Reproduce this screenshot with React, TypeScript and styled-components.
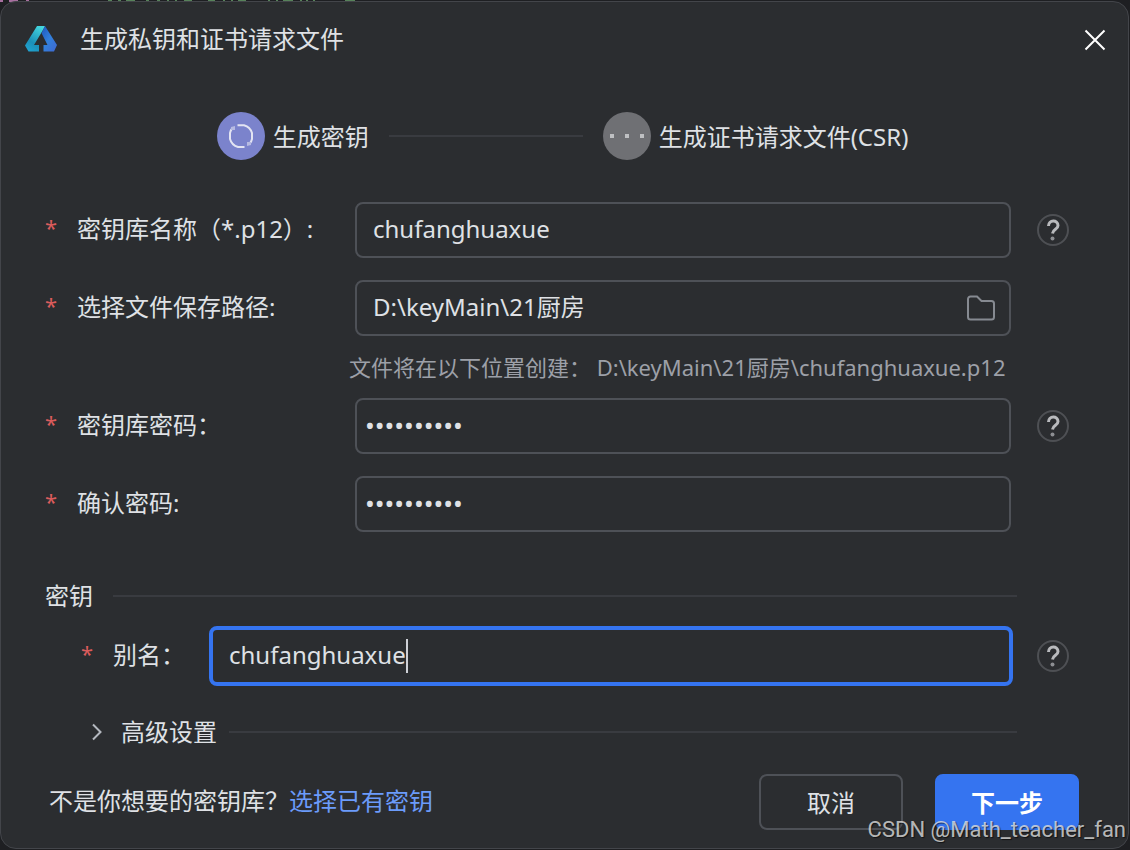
import React, { useState } from "react";
import styled, { createGlobalStyle } from "styled-components";

const GlobalStyle = createGlobalStyle`
  *, *::before, *::after { box-sizing: border-box; }
  body {
    margin: 0;
    background: #1e1f22;
    color: #dfe1e5;
    font-family: "Noto Sans", "Noto Sans CJK SC", sans-serif;
    font-size: 24px;
    line-height: 32px;
  }
  button, input { font: inherit; color: inherit; }
`;

const Screen = styled.div`
  position: relative;
  min-height: 100vh;
  display: flex;
  padding: 1px 1px 1px 0;
`;

const CodeFringe = styled.svg`
  position: absolute;
  top: 0;
  left: 0;
`;

const Dialog = styled.main`
  flex: 1;
  display: flex;
  flex-direction: column;
  background: #2b2d30;
  border: 1px solid #43454a;
  border-radius: 16px;
  position: relative;
`;

const TitleBar = styled.header`
  display: flex;
  align-items: center;
  height: 76px;
  padding: 0 22px 0 23px;
`;

const Title = styled.h1`
  flex: 1;
  margin: 0 0 0 22px;
  padding-bottom: 2px;
  font-size: 24px;
  font-weight: 400;
`;

const IconButton = styled.button`
  display: flex;
  padding: 0;
  border: 0;
  background: none;
  cursor: pointer;
`;

const Steps = styled.ol`
  display: flex;
  justify-content: center;
  align-items: center;
  gap: 20px;
  margin: 0;
  padding: 34px 4px 42px 0;
  list-style: none;
`;

const Step = styled.li`
  display: flex;
  align-items: center;
  gap: 8px;
`;

const StepName = styled.span`
  padding-top: 2px;
`;

const StepLine = styled.li`
  width: 194px;
  height: 2px;
  background: #393b40;
`;

const Form = styled.form`
  display: flex;
  flex-direction: column;
  flex: 1;
`;

const Fields = styled.div`
  display: flex;
  flex-direction: column;
  gap: 22px;
  padding: 0 59px 0 44px;
`;

const Row = styled.div<{ $indent?: boolean }>`
  display: flex;
  align-items: center;
  padding-left: ${(p) => (p.$indent ? 36 : 0)}px;
`;

const Star = styled.span`
  width: 32px;
  padding-bottom: 6px;
  font-size: 22px;
  color: #db5c5c;
`;

const Label = styled.label<{ $short?: boolean }>`
  width: ${(p) => (p.$short ? 96 : 278)}px;
  padding-bottom: 2px;
  white-space: nowrap;
`;

const Field = styled.div<{ $focused?: boolean; $secret?: boolean }>`
  flex: 1;
  display: flex;
  align-items: center;
  min-width: 0;
  height: ${(p) => (p.$focused ? 60 : 56)}px;
  padding: 0 ${(p) => (p.$secret ? 8 : 16)}px;
  padding-right: 13px;
  border: ${(p) => (p.$focused ? "4px solid #3574f0" : "2px solid #4e5157")};
  border-radius: 8px;
`;

const Input = styled.input<{ $fit?: boolean }>`
  flex: ${(p) => (p.$fit ? "none" : 1)};
  field-sizing: ${(p) => (p.$fit ? "content" : "fixed")};
  min-width: 0;
  padding: 0 0 2px;
  border: 0;
  outline: 0;
  background: none;
  caret-color: ${(p) => (p.$fit ? "transparent" : "auto")};
  &[type="password"] { font-size: 26px; }
`;

const Caret = styled.span`
  width: 2px;
  height: 34px;
  background: #ced0d6;
`;

const HelpSlot = styled.div`
  display: flex;
  width: 58px;
  padding-left: 26px;
`;

const FieldGroup = styled.div`
  display: flex;
  flex-direction: column;
`;

const Hint = styled.p`
  margin: 15px 0 -7px 304px;
  font-size: 22px;
  white-space: pre;
  color: #9da0a8;
`;

const SectionHead = styled.div<{ $nested?: boolean }>`
  display: flex;
  align-items: center;
  gap: ${(p) => (p.$nested ? 12 : 20)}px;
  padding: 0 111px 0 ${(p) => (p.$nested ? 88 : 44)}px;
  margin-top: ${(p) => (p.$nested ? 30 : 48)}px;
  margin-bottom: ${(p) => (p.$nested ? 0 : 14)}px;
`;

const SectionTitle = styled.h2`
  margin: 0;
  font-size: 24px;
  font-weight: 400;
`;

const Rule = styled.span`
  flex: 1;
  height: 2px;
  background: #393b40;
`;

const Disclosure = styled.button`
  display: flex;
  align-items: center;
  gap: 16px;
  padding: 0;
  border: 0;
  background: none;
  cursor: pointer;
`;

const AliasBlock = styled.div`
  padding: 0 59px 0 44px;
`;

const AliasField = styled(Field)`
  margin-right: -2px;
`;

const Footer = styled.footer`
  display: flex;
  align-items: center;
  gap: 32px;
  margin-top: auto;
  padding: 0 49px 18px 48px;
`;

const Prompt = styled.p`
  flex: 1;
  margin: 0;
  padding-bottom: 2px;
`;

const Link = styled.a`
  color: #6b9bfa;
  text-decoration: none;
`;

const Button = styled.button<{ $primary?: boolean }>`
  width: 144px;
  height: 56px;
  padding: 2px 0 0;
  border: 2px solid ${(p) => (p.$primary ? "#3574f0" : "#4e5157")};
  border-radius: 8px;
  background: ${(p) => (p.$primary ? "#3574f0" : "transparent")};
  color: ${(p) => (p.$primary ? "#fff" : "#dfe1e5")};
  font-weight: ${(p) => (p.$primary ? 700 : 400)};
  cursor: pointer;
`;

const Watermark = styled.div`
  position: absolute;
  right: 4px;
  bottom: 4px;
  font-family: Roboto, sans-serif;
  font-size: 22px;
  color: rgba(225, 225, 225, 0.8);
  text-shadow: 1px 1px 1px rgba(0, 0, 0, 0.6);
  pointer-events: none;
`;

const Logo = () => (
  <svg width="34" height="28" viewBox="0 0 34 28" aria-hidden="true">
    <defs>
      <linearGradient id="armLeft" x1="0.7" y1="0" x2="0.2" y2="1">
        <stop offset="0" stopColor="#43d5de" />
        <stop offset="0.65" stopColor="#1b8fb8" />
        <stop offset="1" stopColor="#20a3d0" />
      </linearGradient>
      <linearGradient id="armRight" x1="0" y1="0" x2="1" y2="1">
        <stop offset="0" stopColor="#1d55bd" />
        <stop offset="0.5" stopColor="#3280dc" />
        <stop offset="1" stopColor="#4067cf" />
      </linearGradient>
    </defs>
    <path d="M13 0h8l-2 4L10 19H15v6.500H4.500L1 19.500z" fill="url(#armLeft)" />
    <path d="M21 0l12 19-3 6.500H19.500V19h4L17.500 7z" fill="url(#armRight)" />
  </svg>
);

const SyncIcon = () => (
  <svg width="48" height="48" viewBox="0 0 48 48" fill="none" aria-hidden="true">
    <circle cx="24" cy="24" r="24" fill="#7b83cc" />
    <g stroke="#e3e4f2" strokeWidth="2">
      <path d="M20.500 13.200H27A11.500 11.500 0 0 1 35 21v6a11 11 0 0 1-2.500 5" />
      <path d="M27.500 35H21A11.500 11.500 0 0 1 13 27v-6a11 11 0 0 1 2.500-5" />
    </g>
    <path d="M30 30h4v3l-4 1zM18 18h-4v-3l4-1z" fill="#b7bbe2" />
  </svg>
);

const PendingIcon = () => (
  <svg width="48" height="48" viewBox="0 0 48 48" aria-hidden="true">
    <circle cx="24" cy="24" r="24" fill="#6f7074" />
    <path d="M7 22h4v4H7zM22 22h4v4h-4zM37 22h4v4h-4z" fill="#bfc0c3" />
  </svg>
);

const HelpIcon = () => (
  <svg width="32" height="32" viewBox="0 0 32 32" fill="none" aria-hidden="true">
    <circle cx="16" cy="16" r="15" stroke="#4e5054" strokeWidth="2" />
    <path d="M11.500 12C11.500 5.500 21 5.500 21 11.500c0 4-5 3.500-5.500 8" stroke="#b9babd" strokeWidth="3" />
    <circle cx="15.500" cy="24.500" r="2" fill="#8d8f93" />
  </svg>
);

const FolderIcon = () => (
  <svg width="30" height="26" viewBox="0 0 30 26" fill="none" aria-hidden="true">
    <path d="M2 4a2.500 2.500 0 0 1 2.500-2.500H11l4.500 4.500h10a2.500 2.500 0 0 1 2.500 2.500V22a2.500 2.500 0 0 1-2.500 2.500h-21A2.500 2.500 0 0 1 2 22z" stroke="#868a91" strokeWidth="2" />
  </svg>
);

const Help = ({ topic }: { topic: string }) => (
  <HelpSlot>
    {topic && (
      <IconButton type="button" aria-label={topic}>
        <HelpIcon />
      </IconButton>
    )}
  </HelpSlot>
);

export default function App() {
  const [name, setName] = useState("chufanghuaxue");
  const [folder, setFolder] = useState("D:\\keyMain\\21厨房");
  const [alias, setAlias] = useState("chufanghuaxue");

  return (
    <Screen>
      <GlobalStyle />
      <CodeFringe width="400" height="3" aria-hidden="true">
        <path d="M0 1h3M9 1h9M26 1h3" stroke="#a8709f" strokeWidth="2" />
        <path d="M108 1h4M118 1h3M126 1h9M146 1h3M157 1h3M167 1h2M175 1h2M184 1h8M208 1h7M223 1h2M231 1h2M238 1h8M268 1h2M276 1h2M283 1h10M300 1h2M306 1h2M313 1h2M345 1h10" stroke="#57825a" strokeWidth="2" />
      </CodeFringe>
      <Dialog>
        <TitleBar>
          <Logo />
          <Title>生成私钥和证书请求文件</Title>
          <IconButton type="button" aria-label="关闭">
            <svg width="22" height="22" viewBox="0 0 22 22" aria-hidden="true">
              <path d="M1.500 1.500l19 19M20.500 1.500l-19 19" stroke="#fff" strokeWidth="2" />
            </svg>
          </IconButton>
        </TitleBar>

        <Steps>
          <Step aria-current="step">
            <SyncIcon />
            <StepName>生成密钥</StepName>
          </Step>
          <StepLine aria-hidden="true" />
          <Step>
            <PendingIcon />
            <StepName>生成证书请求文件(CSR)</StepName>
          </Step>
        </Steps>

        <Form onSubmit={(e) => e.preventDefault()}>
          <Fields>
            <Row>
              <Star>*</Star>
              <Label htmlFor="store">密钥库名称（*.p12）:</Label>
              <Field>
                <Input id="store" value={name} onChange={(e) => setName(e.target.value)} />
              </Field>
              <Help topic="密钥库名称帮助" />
            </Row>
            <FieldGroup>
              <Row>
                <Star>*</Star>
                <Label htmlFor="folder">选择文件保存路径:</Label>
                <Field>
                  <Input id="folder" value={folder} onChange={(e) => setFolder(e.target.value)} />
                  <IconButton type="button" aria-label="浏览">
                    <FolderIcon />
                  </IconButton>
                </Field>
                <Help topic="" />
              </Row>
              <Hint>{`文件将在以下位置创建： ${folder}\\${name}.p12`}</Hint>
            </FieldGroup>
            <Row>
              <Star>*</Star>
              <Label htmlFor="password">密钥库密码：</Label>
              <Field $secret>
                <Input id="password" type="password" defaultValue="0123456789" />
              </Field>
              <Help topic="密钥库密码帮助" />
            </Row>
            <Row>
              <Star>*</Star>
              <Label htmlFor="confirm">确认密码:</Label>
              <Field $secret>
                <Input id="confirm" type="password" defaultValue="0123456789" />
              </Field>
              <Help topic="" />
            </Row>
          </Fields>

          <SectionHead>
            <SectionTitle>密钥</SectionTitle>
            <Rule />
          </SectionHead>
          <AliasBlock>
            <Row $indent>
              <Star>*</Star>
              <Label htmlFor="alias" $short>别名：</Label>
              <AliasField $focused>
                <Input id="alias" $fit value={alias} onChange={(e) => setAlias(e.target.value)} />
                <Caret />
              </AliasField>
              <Help topic="别名帮助" />
            </Row>
          </AliasBlock>
          <SectionHead $nested>
            <Disclosure type="button" aria-expanded="false">
              <svg width="16" height="18" viewBox="0 0 16 18" fill="none" aria-hidden="true">
                <path d="M4 1.500l7.500 7.500L4 16.500" stroke="#b4b8bf" strokeWidth="2" />
              </svg>
              高级设置
            </Disclosure>
            <Rule />
          </SectionHead>

          <Footer>
            <Prompt>
              不是你想要的密钥库？<Link href="#existing">选择已有密钥</Link>
            </Prompt>
            <Button type="button">取消</Button>
            <Button type="submit" $primary>下一步</Button>
          </Footer>
        </Form>
      </Dialog>
      <Watermark>CSDN @Math_teacher_fan</Watermark>
    </Screen>
  );
}
